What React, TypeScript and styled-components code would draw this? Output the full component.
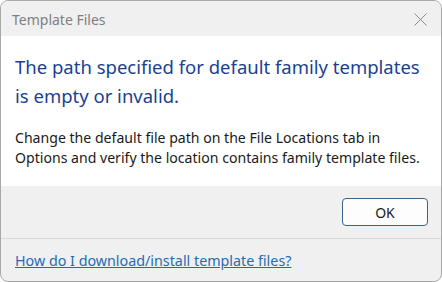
import React from "react";
import styled, { createGlobalStyle } from "styled-components";

const GlobalStyle = createGlobalStyle`
  html, body {
    margin: 0;
    padding: 0;
    background: #ffffff;
  }
  body {
    font-family: "Noto Sans", "Open Sans", "Liberation Sans", sans-serif;
  }
`;

const Window = styled.div`
  width: 442px;
  height: 282px;
  box-sizing: border-box;
  border: 1px solid #a9a9a9;
  border-radius: 8px;
  overflow: hidden;
  display: flex;
  flex-direction: column;
  background: #f0f0f0;
`;

const TitleBar = styled.div`
  height: 35px;
  display: flex;
  align-items: center;
  justify-content: space-between;
  padding: 2px 14px 0 11px;
  box-sizing: border-box;
  background: #f0f0f0;
`;

const Title = styled.div`
  font-size: 14px;
  color: #7f7f7f;
`;

const CloseButton = styled.button`
  width: 14px;
  height: 14px;
  padding: 0;
  border: none;
  background: none;
  display: flex;
  align-items: center;
  justify-content: center;
`;

const Body = styled.div`
  background: #ffffff;
  height: 150px;
  padding: 16px 14px 0 14px;
  box-sizing: border-box;
`;

const Heading = styled.div`
  font-size: 18.5px;
  line-height: 29px;
  color: #1b3f91;
  white-space: nowrap;
`;

const Message = styled.div`
  margin-top: 18px;
  font-size: 14.1px;
  line-height: 20px;
  color: #1a1a1a;
  white-space: nowrap;
`;

const ButtonRow = styled.div`
  height: 52px;
  display: flex;
  align-items: center;
  justify-content: flex-end;
  padding: 0 13px 0 0;
  border-bottom: 1px solid #d9d9d9;
`;

const OkButton = styled.button`
  width: 86px;
  height: 28px;
  border: 1px solid #3b6289;
  border-radius: 4px;
  background: #fdfdfd;
  font-family: inherit;
  font-size: 14px;
  color: #1a1a1a;
  padding: 0;
`;

const Footer = styled.div`
  flex: 1;
  display: flex;
  align-items: center;
  padding: 0 14px 0 14px;
`;

const HelpLink = styled.a`
  font-size: 14.3px;
  color: #1f6cb4;
  text-decoration: underline;
  cursor: pointer;
`;

const App: React.FC = () => {
  return (
    <>
      <GlobalStyle />
      <Window>
        <TitleBar>
          <Title>Template Files</Title>
          <CloseButton aria-label="Close">
            <svg width="13" height="13" viewBox="0 0 13 13">
              <path d="M0.5 0.5 L12.5 12.5 M12.5 0.5 L0.5 12.5" stroke="#8a8a8a" strokeWidth="1" fill="none" />
            </svg>
          </CloseButton>
        </TitleBar>
        <Body>
          <Heading>
            The path specified for default family templates
            <br />
            is empty or invalid.
          </Heading>
          <Message>
            Change the default file path on the File Locations tab in
            <br />
            Options and verify the location contains family template files.
          </Message>
        </Body>
        <ButtonRow>
          <OkButton>OK</OkButton>
        </ButtonRow>
        <Footer>
          <HelpLink>How do I download/install template files?</HelpLink>
        </Footer>
      </Window>
    </>
  );
};

export default App;
